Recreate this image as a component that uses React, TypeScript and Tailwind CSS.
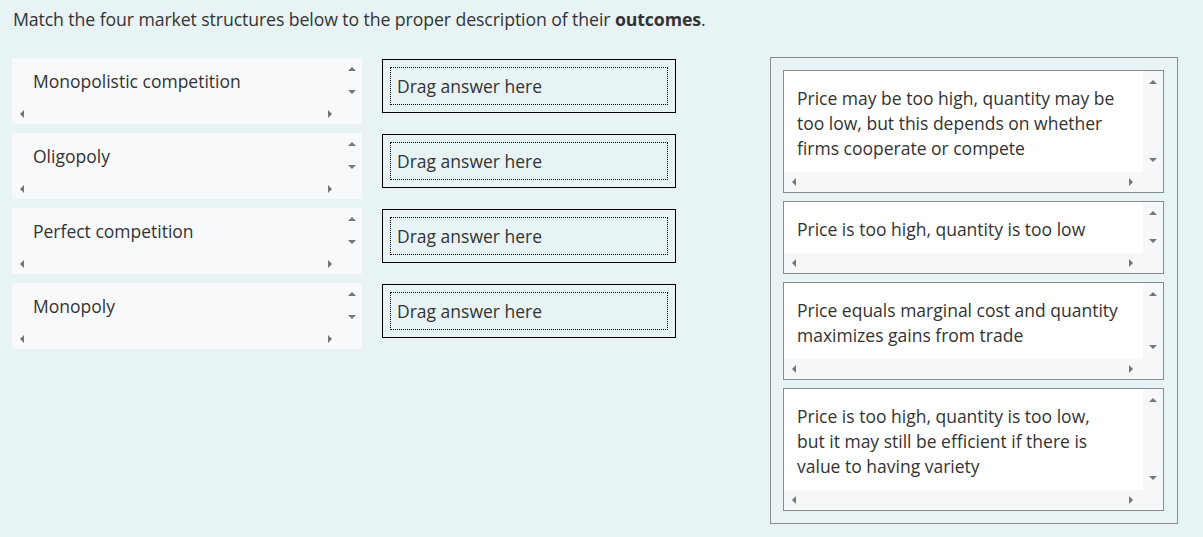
import React from "react";

const structures = ["Monopolistic competition", "Oligopoly", "Perfect competition", "Monopoly"];

const outcomes = [
  "Price may be too high, quantity may be too low, but this depends on whether firms cooperate or compete",
  "Price is too high, quantity is too low",
  "Price equals marginal cost and quantity maximizes gains from trade",
  "Price is too high, quantity is too low, but it may still be efficient if there is value to having variety",
];

const Arrow = ({ dir }: { dir: "up" | "down" | "left" | "right" }) => {
  const pts = {
    up: "0,4 4,0 8,4",
    down: "0,0 8,0 4,4",
    left: "4,0 4,8 0,4",
    right: "0,0 4,4 0,8",
  }[dir];
  const vertical = dir === "up" || dir === "down";
  return (
    <svg width={vertical ? 8 : 4} height={vertical ? 4 : 8} viewBox={vertical ? "0 0 8 4" : "0 0 4 8"}>
      <polygon points={pts} fill="#72767b" />
    </svg>
  );
};

function ScrollBox({
  children,
  contentClass,
  barClass,
}: {
  children: React.ReactNode;
  contentClass: string;
  barClass: string;
}) {
  return (
    <div className="grid grid-cols-[1fr_20px] grid-rows-[1fr_20px]">
      <div className={contentClass}>{children}</div>
      <div className={`${barClass} flex flex-col items-center justify-between pt-[9px] pb-[10px]`}>
        <Arrow dir="up" />
        <Arrow dir="down" />
      </div>
      <div className={`${barClass} flex items-center justify-between pl-[8px] pr-[10px]`}>
        <Arrow dir="left" />
        <Arrow dir="right" />
      </div>
      <div className={barClass}></div>
    </div>
  );
}

export default function App() {
  return (
    <div
      className="min-h-screen bg-[#e7f3f5] text-[#333333] px-[13px] pt-[6px]"
      style={{ fontFamily: '"Open Sans", "Noto Sans", sans-serif' }}
    >
      <p className="text-[17.7px] leading-[26px] tracking-[-0.1px]">
        Match the four market structures below to the proper description of their <b>outcomes</b>.
      </p>

      <div className="flex items-start mt-[25px] -ml-px">
        <div className="flex flex-col gap-[9px] w-[350px] mt-px">
          {structures.map((s) => (
            <div key={s} className="flex items-start gap-[20px]">
              <div className="w-[350px] h-[66px] shrink-0 bg-[#f8f9fb]">
                <ScrollBox contentClass="h-[46px] pl-[21px] pt-[11px]" barClass="bg-[#f8f9fb]">
                  <span className="text-[17.5px] leading-[24px] block">{s}</span>
                </ScrollBox>
              </div>
              <div className="w-[294px] h-[54px] shrink-0 mt-px border border-black p-[7px]">
                <div className="h-full border border-dotted border-black flex items-center pl-[6px] pt-px text-[17.5px]">
                  Drag answer here
                </div>
              </div>
            </div>
          ))}
        </div>

        <div className="ml-[408px] w-[408px] border border-[#8b8b8b] pl-[12px] pr-[13px] pt-[12px] pb-[12px] flex flex-col gap-[8px]">
          {outcomes.map((o) => (
            <div key={o} className="border border-[#8b8b8b]">
              <ScrollBox contentClass="bg-white pl-[13px] pt-[15px] pb-[11px]" barClass="bg-[#f6f7f9]">
                <span className="text-[17.5px] leading-[25px] block max-w-[323px]">{o}</span>
              </ScrollBox>
            </div>
          ))}
        </div>
      </div>
    </div>
  );
}
